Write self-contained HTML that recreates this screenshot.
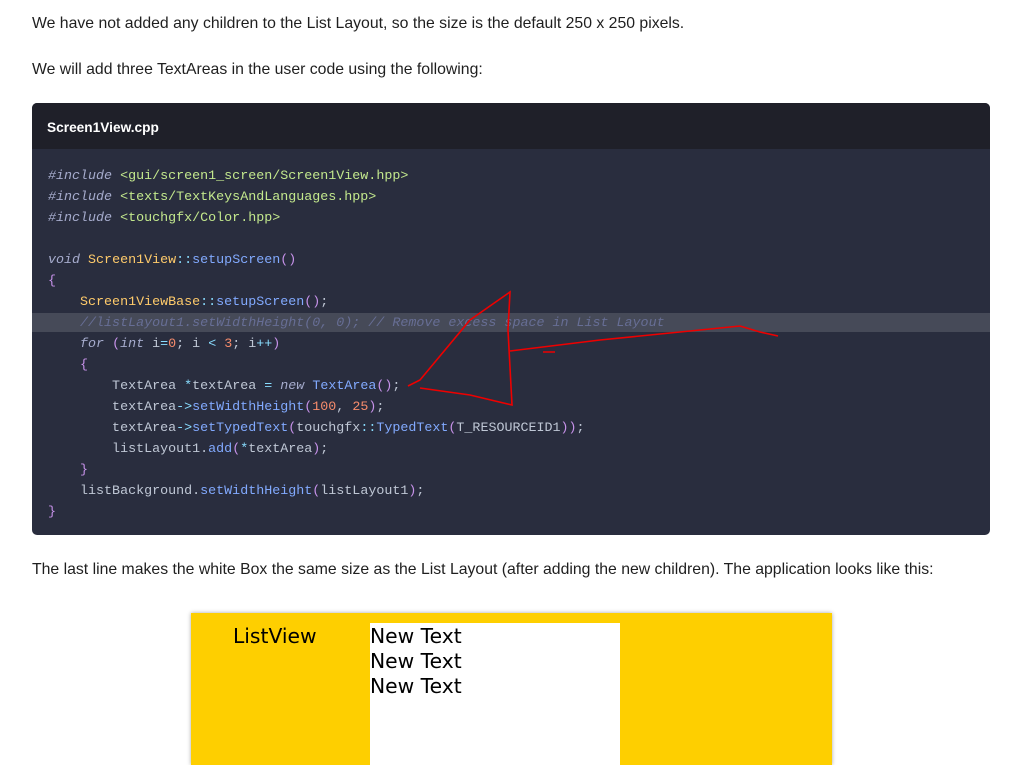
<!DOCTYPE html>
<html><head><meta charset="utf-8"><style>
body{margin:0;background:#fff;width:1022px;height:765px;overflow:hidden;position:relative;font-family:"Liberation Sans",sans-serif;color:#1f1f1f}
p{position:absolute;left:32px;margin:0;font-size:15.8px;line-height:20px}
.cb{position:absolute;left:32px;top:103px;width:958px;height:432px;background:#292d3e;border-radius:5px;overflow:hidden}
.hd{height:46px;background:#1f2029;color:#fff;font-weight:bold;font-size:13.7px;line-height:50px;padding-left:15px}
pre{margin:0;position:absolute;top:63px;left:16px;font-family:"Liberation Mono",monospace;font-size:13.35px;line-height:21px;color:#bfc7d5}
.hl{position:absolute;left:0;top:210px;width:958px;height:19px;background:#464a58}
.k{color:#a6accd;font-style:italic}.c{color:#676e95;font-style:italic}.s{color:#c3e88d}.y{color:#ffcb6b}.f{color:#82aaff}.n{color:#f78c6c}.p{color:#c792ea}.o{color:#89ddff}
.yb{position:absolute;left:191px;top:613px;width:641px;height:152px;background:#fecf00;box-shadow:0 0 4px rgba(0,0,0,.35)}
.wb{position:absolute;left:179px;top:10px;width:250px;height:142px;background:#fff}
.t{position:absolute;font-family:"DejaVu Sans",sans-serif;font-size:20.3px;line-height:25px;color:#000}
</style></head><body>
<p style="top:14px">We have not added any children to the List Layout, so the size is the default 250 x 250 pixels.</p>
<p style="top:60px">We will add three TextAreas in the user code using the following:</p>
<div class="cb"><div class="hd">Screen1View.cpp</div><div class="hl"></div>
<pre><span class="k">#include</span> <span class="s">&lt;gui/screen1_screen/Screen1View.hpp&gt;</span>
<span class="k">#include</span> <span class="s">&lt;texts/TextKeysAndLanguages.hpp&gt;</span>
<span class="k">#include</span> <span class="s">&lt;touchgfx/Color.hpp&gt;</span>

<span class="k">void</span> <span class="y">Screen1View</span><span class="o">::</span><span class="f">setupScreen</span><span class="p">()</span>
<span class="p">{</span>
    <span class="y">Screen1ViewBase</span><span class="o">::</span><span class="f">setupScreen</span><span class="p">()</span>;
    <span class="c">//listLayout1.setWidthHeight(0, 0); // Remove excess space in List Layout</span>
    <span class="k">for</span> <span class="p">(</span><span class="k">int</span> i<span class="o">=</span><span class="n">0</span>; i <span class="o">&lt;</span> <span class="n">3</span>; i<span class="o">++</span><span class="p">)</span>
    <span class="p">{</span>
        TextArea <span class="o">*</span>textArea <span class="o">=</span> <span class="k">new</span> <span class="f">TextArea</span><span class="p">()</span>;
        textArea<span class="o">-&gt;</span><span class="f">setWidthHeight</span><span class="p">(</span><span class="n">100</span>, <span class="n">25</span><span class="p">)</span>;
        textArea<span class="o">-&gt;</span><span class="f">setTypedText</span><span class="p">(</span>touchgfx<span class="o">::</span><span class="f">TypedText</span><span class="p">(</span>T_RESOURCEID1<span class="p">))</span>;
        listLayout1.<span class="f">add</span><span class="p">(</span><span class="o">*</span>textArea<span class="p">)</span>;
    <span class="p">}</span>
    listBackground.<span class="f">setWidthHeight</span><span class="p">(</span>listLayout1<span class="p">)</span>;
<span class="p">}</span></pre>
</div>
<svg style="position:absolute;left:0;top:0" width="1022" height="765"><path d="M408,386 L420,380 L470,320 L510,292 L508,330 L512,405 L470,395 L420,388 M510,351 L600,340 L700,330 L740,326 L760,332 L778,336 M543,352 L555,352" fill="none" stroke="#e00" stroke-width="1.6"/></svg>
<p style="top:560px">The last line makes the white Box the same size as the List Layout (after adding the new children). The application looks like this:</p>
<div class="yb"><div class="t" style="left:42px;top:11px">ListView</div><div class="wb">
<div class="t" style="left:0;top:1px">New Text</div><div class="t" style="left:0;top:26px">New Text</div><div class="t" style="left:0;top:51px">New Text</div></div></div>
</body></html>
